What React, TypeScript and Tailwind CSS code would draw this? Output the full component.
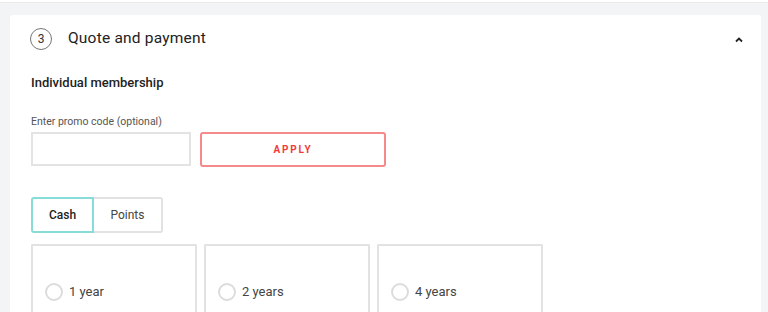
import React from "react";

const font = { fontFamily: "Roboto, 'Noto Sans', sans-serif" };

function Option({ label }: { label: string }) {
  return (
    <div className="w-[166px] h-[80px] border-2 border-[#e2e2e2] rounded-t-[2px] border-b-0 flex items-start pt-[37px] pl-[12px] gap-[6px]">
      <span className="w-[18px] h-[18px] rounded-full border-2 border-[#dcdcdc] bg-white" />
      <span className="text-[13px] text-[#444] leading-[18px]">{label}</span>
    </div>
  );
}

export default function App() {
  return (
    <div style={font} className="w-[768px] h-[312px] overflow-hidden bg-[#f3f4f5]">
      <div className="h-[2px] bg-white" />
      <div className="h-[1px] bg-[#e9eaeb]" />
      <div className="pt-[12px] pl-[10px] pr-[7px]">
        <div className="bg-white rounded-[3px] h-[320px] pl-[21px] pr-[18px]">
          <div className="flex items-center h-[48px]">
            <span className="w-[22px] h-[22px] rounded-full border-[1.5px] border-[#777] flex items-center justify-center text-[12px] text-[#333] -ml-[1px]">3</span>
            <span className="ml-[16px] text-[15.5px] text-[#222] tracking-[0.2px]">Quote and payment</span>
            <svg className="ml-auto mt-[1px]" width="8" height="6" viewBox="0 0 8 6">
              <path d="M1 4.5 L4 1.5 L7 4.5" stroke="#222" strokeWidth="1.8" fill="none" />
            </svg>
          </div>
          <div className="mt-[10px] text-[13px] font-medium text-[#222]">Individual membership</div>
          <div className="mt-[21px] text-[10.5px] text-[#555]">Enter promo code (optional)</div>
          <div className="mt-[3px] flex items-start gap-[9px]">
            <div className="w-[160px] h-[34px] border-2 border-[#e3e3e3]" />
            <button className="w-[186px] h-[35px] border-2 border-[#f58a8a] rounded-[3px] text-[#f03c3c] text-[10px] font-bold tracking-[1.8px]">
              APPLY
            </button>
          </div>
          <div className="mt-[30px] flex">
            <div className="w-[63px] h-[36px] border-2 border-[#86dcd8] rounded-l-[3px] flex items-center justify-center text-[12px] text-[#222] font-medium">Cash</div>
            <div className="w-[69px] h-[36px] border-2 border-l-0 border-[#e2e2e2] rounded-r-[3px] flex items-center justify-center text-[12px] text-[#444]">Points</div>
          </div>
          <div className="mt-[11px] flex gap-[7px]">
            <Option label="1 year" />
            <Option label="2 years" />
            <Option label="4 years" />
          </div>
        </div>
      </div>
    </div>
  );
}
